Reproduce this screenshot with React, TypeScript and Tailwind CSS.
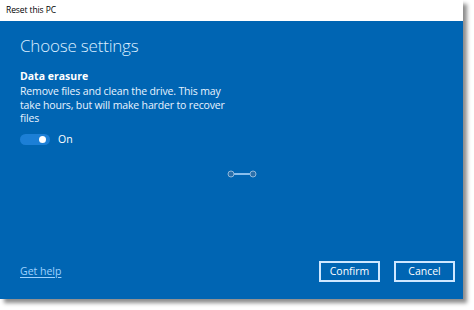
import React from "react";

export default function App() {
  return (
    <div className="w-[474px] h-[310px] bg-white overflow-hidden" style={{ fontFamily: '"Open Sans", "Noto Sans", sans-serif' }}>
      <div className="w-[463px] h-[299px] flex flex-col shadow-[4px_4px_4px_rgba(0,0,0,0.45)]">
        <div className="h-[21px] bg-white flex items-center px-[6px] text-[8.5px] text-black tracking-[-0.1px]">
          Reset this PC
        </div>
        <div className="flex-1 bg-[#0065b3] flex flex-col pl-[20px] pr-[8px] pb-[17px]">
          <div className="mt-[13px] text-[17px] leading-[24px] text-[#dbeeff] font-light tracking-[-0.2px]">
            Choose settings
          </div>
          <div className="mt-[12px] text-[10.5px] leading-[13px] font-bold text-white">Data erasure</div>
          <div className="mt-[2px] w-[215px] text-[10.5px] leading-[13.5px] text-[#e8f3ff] tracking-[-0.15px]">
            Remove files and clean the drive. This may take hours, but will make harder to recover files
          </div>
          <div className="mt-[6px] flex items-center gap-[8px]">
            <div className="w-[30px] h-[11px] rounded-full bg-[#1c7fd6] flex items-center justify-end pr-[4px]">
              <div className="w-[7px] h-[7px] rounded-full bg-white" />
            </div>
            <span className="text-[10.5px] text-white">On</span>
          </div>
          <div className="flex-1 flex items-start justify-center pt-[22px] pl-[8px]">
            <svg width="30" height="10" viewBox="0 0 30 10">
              <line x1="6.5" y1="5" x2="23.5" y2="5" stroke="#b7dcff" strokeWidth="1.5" />
              <circle cx="4" cy="5" r="3" fill="#2a6faa" stroke="#8fb7da" strokeWidth="1" />
              <circle cx="26" cy="5" r="3" fill="#2a6faa" stroke="#8fb7da" strokeWidth="1" />
            </svg>
          </div>
          <div className="flex items-center">
            <a className="text-[10.5px] text-[#9fd2ff] underline underline-offset-2">Get help</a>
            <div className="flex-1" />
            <button className="w-[61px] h-[21px] border-2 border-[#cfe7ff] text-[10.5px] text-white flex items-center justify-center">
              Confirm
            </button>
            <button className="ml-[14px] w-[61px] h-[21px] border-2 border-[#cfe7ff] text-[10.5px] text-white flex items-center justify-center">
              Cancel
            </button>
          </div>
        </div>
      </div>
    </div>
  );
}
